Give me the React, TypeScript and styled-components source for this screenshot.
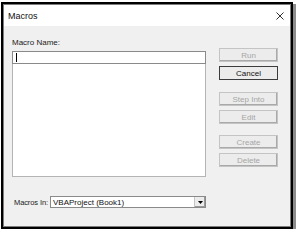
import React from 'react'
import styled, { createGlobalStyle } from 'styled-components'

const GlobalStyle = createGlobalStyle`
  html, body {
    margin: 0;
    padding: 0;
    background: #ffffff;
    font-family: "Liberation Sans", Arial, sans-serif;
  }
`

const Frame = styled.div`
  box-sizing: border-box;
  margin: 2px 0 0 1px;
  width: 292px;
  height: 227px;
  border: 2px solid #000;
  box-shadow: 3px 2px 0 #8c8c8c;
`

const Window = styled.div`
  box-sizing: border-box;
  height: 100%;
  border: 1px solid #7d7d7d;
  background: #f0f0f0;
  display: flex;
  flex-direction: column;
`

const TitleBar = styled.div`
  height: 21px;
  background: #fff;
  display: flex;
  align-items: center;
  justify-content: space-between;
  padding: 0 6px 0 4px;
  flex-shrink: 0;
`

const Title = styled.span`
  font-size: 9px;
  color: #111;
`

const Body = styled.div`
  flex: 1;
  display: flex;
  flex-direction: column;
  padding: 0 0 0 8px;
`

const Main = styled.div`
  display: grid;
  grid-template-columns: 194px 59px;
  column-gap: 13px;
`

const LeftCol = styled.div`
  display: flex;
  flex-direction: column;
  padding-top: 12px;
`

const Label = styled.label`
  font-size: 8px;
  line-height: 9px;
  color: #222;
  margin-bottom: 4px;
`

const NameInput = styled.div`
  box-sizing: border-box;
  height: 13px;
  background: #fff;
  border: 1px solid #8a8a8a;
  display: flex;
  align-items: center;
  padding-left: 3px;
`

const Caret = styled.span`
  width: 1px;
  height: 9px;
  background: #000;
`

const List = styled.div`
  box-sizing: border-box;
  height: 113px;
  background: #fff;
  border: 1px solid #b4b4b4;
  border-top: none;
`

const RightCol = styled.div`
  display: flex;
  flex-direction: column;
  padding-top: 22px;
`

const Button = styled.div<{ $disabled?: boolean; $default?: boolean; $gap?: number }>`
  box-sizing: border-box;
  height: 14px;
  margin-top: ${(p) => p.$gap ?? 0}px;
  display: flex;
  align-items: center;
  justify-content: center;
  font-size: 8px;
  color: ${(p) => (p.$disabled ? '#a6a6a6' : '#111')};
  background: #ececec;
  border: 1px solid ${(p) => (p.$default ? '#3c3c3c' : '#c4c4c4')};
  box-shadow: ${(p) => (p.$default ? 'none' : 'inset -1px -1px 0 #a9a9a9')};
`

const Footer = styled.div`
  display: flex;
  align-items: center;
  margin-top: 19px;
  padding-left: 2px;
`

const FooterLabel = styled.span`
  font-size: 7.5px;
  letter-spacing: -0.1px;
  color: #222;
  width: 36px;
  flex-shrink: 0;
  white-space: nowrap;
`

const Select = styled.div`
  box-sizing: border-box;
  width: 156px;
  height: 12px;
  background: #fff;
  border: 1px solid #8a8a8a;
  display: flex;
  align-items: center;
  justify-content: space-between;
  font-size: 8px;
  color: #111;
  padding-left: 2px;
`

const Arrow = styled.span`
  box-sizing: border-box;
  width: 11px;
  height: 10px;
  background: #ececec;
  border-left: 1px solid #c4c4c4;
  box-shadow: inset -1px -1px 0 #9a9a9a;
  display: flex;
  align-items: center;
  justify-content: center;
`

export default function App() {
  return (
    <>
      <GlobalStyle />
      <Frame>
        <Window>
          <TitleBar>
            <Title>Macros</Title>
            <svg width="8" height="8" viewBox="0 0 8 8">
              <path d="M0.5 0.5L7.5 7.5M7.5 0.5L0.5 7.5" stroke="#333" strokeWidth="1" />
            </svg>
          </TitleBar>
          <Body>
            <Main>
              <LeftCol>
                <Label>Macro Name:</Label>
                <NameInput>
                  <Caret />
                </NameInput>
                <List />
              </LeftCol>
              <RightCol>
                <Button $disabled>Run</Button>
                <Button $default $gap={4}>Cancel</Button>
                <Button $disabled $gap={12}>Step Into</Button>
                <Button $disabled $gap={4}>Edit</Button>
                <Button $disabled $gap={11}>Create</Button>
                <Button $disabled $gap={4}>Delete</Button>
              </RightCol>
            </Main>
            <Footer>
              <FooterLabel>Macros In:</FooterLabel>
              <Select>
                <span>VBAProject (Book1)</span>
                <Arrow>
                  <svg width="5" height="3" viewBox="0 0 5 3">
                    <path d="M0 0h5L2.5 3z" fill="#000" />
                  </svg>
                </Arrow>
              </Select>
            </Footer>
          </Body>
        </Window>
      </Frame>
    </>
  )
}
